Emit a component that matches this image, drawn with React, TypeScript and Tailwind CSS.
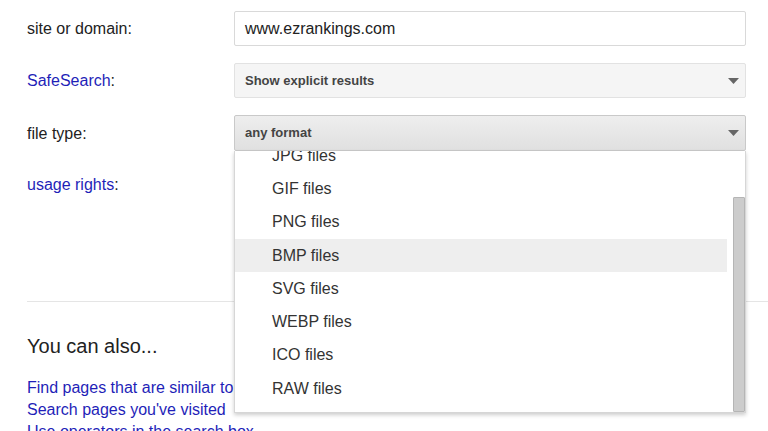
import { useState } from 'react'

const FILE_TYPES = ['JPG files', 'GIF files', 'PNG files', 'BMP files', 'SVG files', 'WEBP files', 'ICO files', 'RAW files']

function Caret() {
  return (
    <svg width="11" height="6" viewBox="0 0 11 6" className="shrink-0">
      <path d="M0 0h11L5.5 6z" fill="#666" />
    </svg>
  )
}

function Label({ text, link }: { text: string; link?: boolean }) {
  return (
    <div className="w-[207px] shrink-0 pt-px text-[16px] text-[#222]">
      {link ? <span className="text-[#1f1fb8]">{text}</span> : text}:
    </div>
  )
}

export default function App() {
  const [hovered] = useState('BMP files')

  return (
    <div className="h-[431px] w-[768px] overflow-hidden bg-white font-['Liberation_Sans',Arial,sans-serif]">
      <div className="relative pl-[27px] pt-[11px]">
        <div className="flex h-[35px] items-center">
          <Label text="site or domain" />
          <div className="flex h-[35px] w-[512px] items-center rounded-[2px] border border-[#d9d9d9] bg-white px-[10px] pt-px text-[16px] text-[#222]">
            www.ezrankings.com
          </div>
        </div>

        <div className="mt-[17px] flex h-[35px] items-center">
          <Label text="SafeSearch" link />
          <div className="flex h-[35px] w-[512px] items-center justify-between rounded-[2px] border border-[#e2e2e2] bg-[#f5f5f5] pl-[10px] pr-[6px] text-[13px] font-bold text-[#444]">
            Show explicit results
            <Caret />
          </div>
        </div>

        <div className="mt-[17px] flex h-[36px] items-center">
          <Label text="file type" />
          <div className="flex h-[36px] w-[512px] items-center justify-between rounded-[2px] border border-[#c9c9c9] bg-gradient-to-b from-[#eeeeee] to-[#e0e0e0] pl-[10px] pr-[6px] text-[13px] font-bold text-[#444]">
            any format
            <Caret />
          </div>
        </div>

        <div className="mt-[16px] flex h-[35px] items-center">
          <Label text="usage rights" link />
        </div>

        <div className="mt-[99px] h-px bg-[#e5e5e5]" />

        <h2 className="mt-[31px] text-[20px] leading-[26px] text-[#222]">You can also...</h2>
        <div className="mt-[18px] flex flex-col text-[16px] leading-[22px] text-[#1f1fb8]">
          <span>Find pages that are similar to, or link to, a URL</span>
          <span>Search pages you've visited</span>
          <span>Use operators in the search box</span>
        </div>

        <div className="absolute left-[234px] top-[151px] h-[262px] w-[512px] overflow-hidden border border-t-0 border-[#d6d6d6] bg-white shadow-[0_2px_4px_rgba(0,0,0,0.2)]">
          <div className="-mt-[12px] w-[492px]">
            {FILE_TYPES.map((t) => (
              <div
                key={t}
                className={`flex h-[33.3px] items-center pl-[37px] text-[16px] text-[#333] ${t === hovered ? 'bg-[#eeeeee]' : ''}`}
              >
                {t}
              </div>
            ))}
          </div>
          <div className="absolute right-0 top-[46px] h-[215px] w-[12px] rounded-[1px] border border-[#b5b5b5] bg-[#cccccc]" />
        </div>
      </div>
    </div>
  )
}
